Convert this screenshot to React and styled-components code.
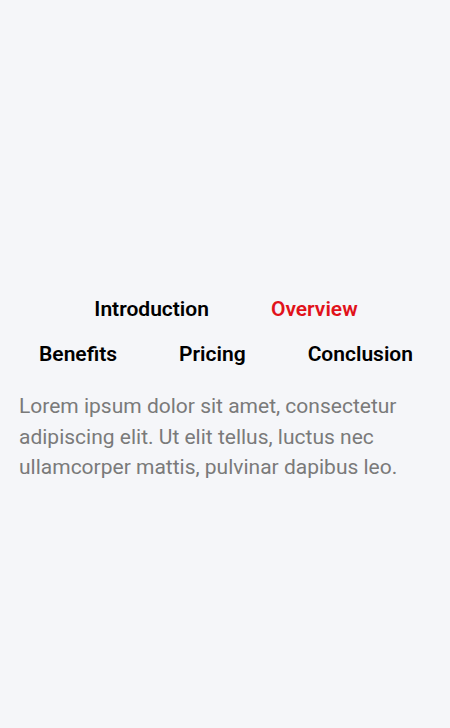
import React, { useState } from "react";
import styled, { createGlobalStyle } from "styled-components";

const Global = createGlobalStyle`
  html, body { margin: 0; padding: 0; background: #f5f6f9; }
  body { font-family: Roboto, "Noto Sans", Arial, sans-serif; }
`;

const Page = styled.div`
  min-height: 728px;
  box-sizing: border-box;
  padding-top: 287px;
`;

const TabList = styled.nav`
  display: flex;
  flex-wrap: wrap;
  justify-content: center;
  padding: 0 0 0 2px;
`;

const Tab = styled.button`
  border: none;
  background: transparent;
  font-family: Roboto, Arial, sans-serif;
  font-size: 21px;
  font-weight: 600;
  line-height: 25px;
  padding: 10px 31px;
  cursor: pointer;
  color: ${(p) => (p.$active ? "#e1121b" : "#000000")};
`;

const Body = styled.p`
  margin: 14px 0 0;
  padding: 0 19px;
  font-size: 21px;
  line-height: 30.5px;
  color: #7a7a7a;
`;

const tabs = ["Introduction", "Overview", "Benefits", "Pricing", "Conclusion"];

export default function App() {
  const [active, setActive] = useState(1);
  return (
    <Page>
      <Global />
      <TabList>
        {tabs.map((t, i) => (
          <Tab key={t} $active={i === active} onClick={() => setActive(i)}>
            {t}
          </Tab>
        ))}
      </TabList>
      <Body>
        Lorem ipsum dolor sit amet, consectetur adipiscing elit. Ut elit tellus, luctus nec ullamcorper mattis, pulvinar dapibus leo.
      </Body>
    </Page>
  );
}
